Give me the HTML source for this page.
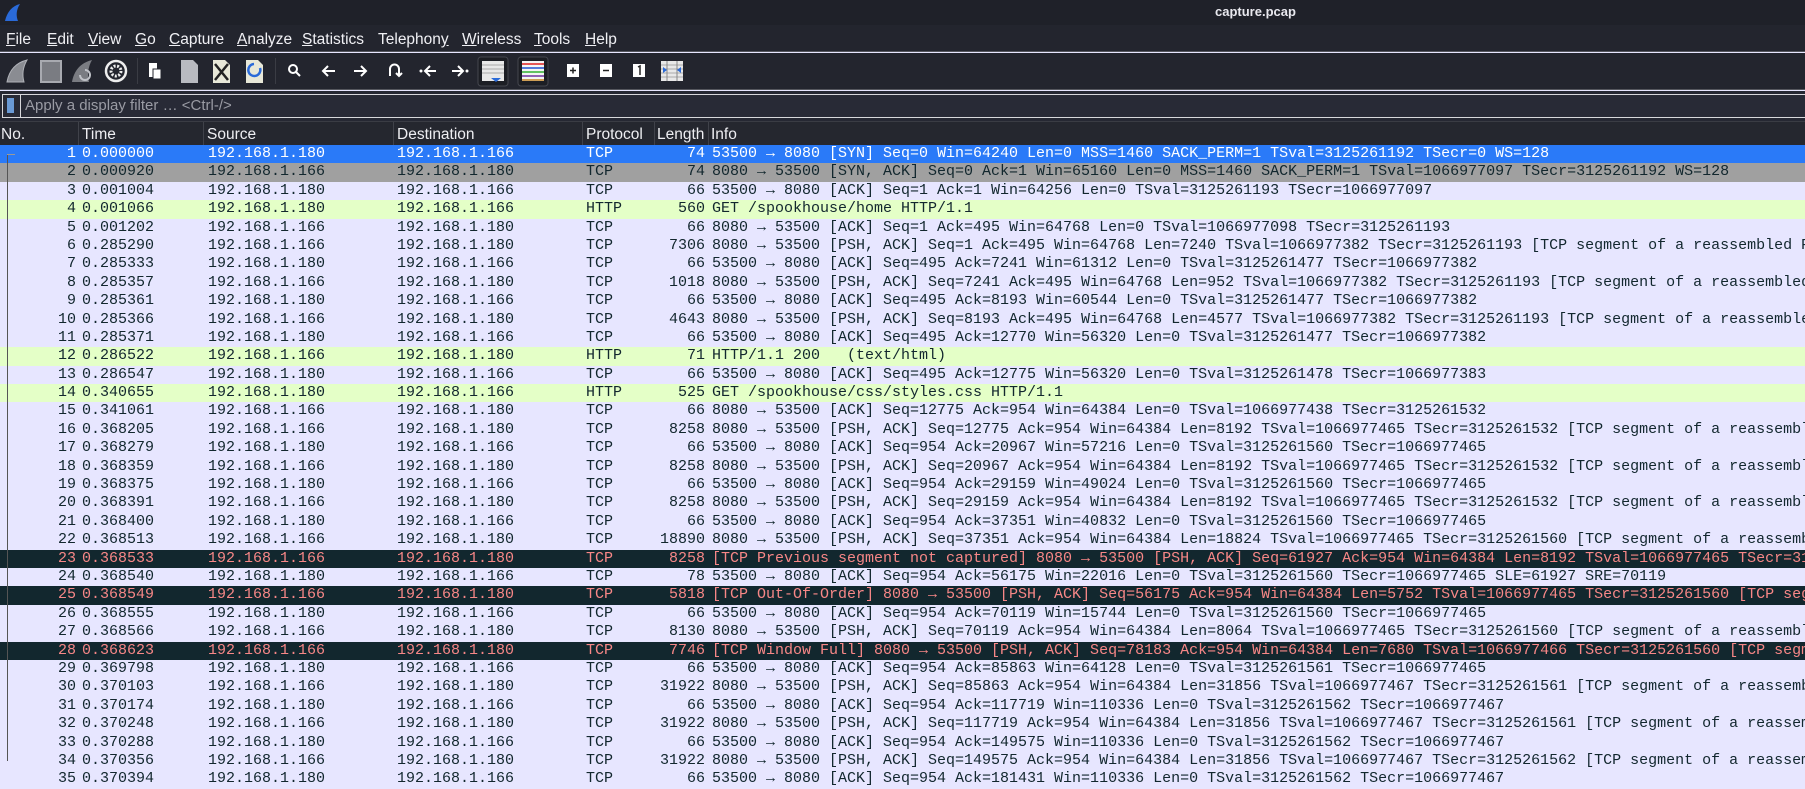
<!DOCTYPE html>
<html><head><meta charset="utf-8"><style>
*{margin:0;padding:0;box-sizing:border-box}
body{width:1805px;height:761px;overflow:hidden;background:#e7e6ff;font-family:"Liberation Sans",sans-serif;position:relative}
#title{position:absolute;left:0;top:0;width:1805px;height:25px;background:#1f2129}
#title .t{position:absolute;left:1215px;top:4px;color:#e8e8ee;font-weight:bold;font-size:13px}
#menu{position:absolute;left:0;top:25px;width:1805px;height:27px;background:#23252e;border-bottom:1px solid #55575e}
#menu span{position:absolute;top:6px;color:#f0f0f4;font-size:15.5px}
#menu u{text-decoration:underline}
#tb{position:absolute;left:0;top:53px;width:1805px;height:37px;background:#23252e;border-bottom:1px solid #55575e}
#tb svg{position:absolute;left:0;top:0}
#fb{position:absolute;left:0;top:91px;width:1805px;height:30px;background:#262833}
#fb .box{position:absolute;left:2px;top:3px;width:1803px;height:24px;border:1px solid #d8d8dc;border-right:none;background:#282a36}
#fb .bm{position:absolute;left:4px;top:3px;width:7px;height:15px;background:#6a9ad6}
#fb .dv{position:absolute;left:17px;top:0;width:1px;height:22px;background:#d8d8dc}
#fb .tx{position:absolute;left:22px;top:2px;color:#9a9ba4;font-size:15px}
#hd{position:absolute;left:0;top:121px;width:1805px;height:24px;background:#25272f;border-top:1px solid #3a3c44}
#hd span{position:absolute;top:4px;color:#eeeef2;font-size:15.5px;height:20px}
#hd i{position:absolute;top:0;width:1px;height:23px;background:#40424a}
#rows{position:absolute;left:0;top:145px;width:1805px}
.r{position:relative;height:18.4px;width:1805px;background:#e7e6ff;color:#12272e;font-family:"Liberation Mono",monospace;font-size:15px;line-height:18.4px;white-space:pre;overflow:hidden}
.r span{position:absolute;top:0}
.n{right:1729px;text-align:right}
.tm{left:82px}.s{left:208px}.d{left:397px}.p{left:586px}
.l{right:1100px;text-align:right}
.i{left:712px}
.sel{background:#2a7af8;color:#fff}
.g{background:#a0a0a0;color:#12272e}
.h{background:#e4ffc7}
.b{background:#12272e;color:#f78787}
#tree{position:absolute;left:7px;top:154px;width:1px;height:607px;background:#555}
#tree2{position:absolute;left:7px;top:154px;width:8px;height:1px;background:#999}
</style></head><body>
<div id="title"><svg width="22" height="22" style="position:absolute;left:3px;top:2px"><path d="M2 19 C4 10 9 4 17 2 C13 8 13 14 15 19 Z" fill="#2a6ad8"/></svg><span class="t">capture.pcap</span></div>
<div id="menu">
<span style="left:6px"><u>F</u>ile</span>
<span style="left:47px"><u>E</u>dit</span>
<span style="left:88px"><u>V</u>iew</span>
<span style="left:135px"><u>G</u>o</span>
<span style="left:169px"><u>C</u>apture</span>
<span style="left:237px"><u>A</u>nalyze</span>
<span style="left:302px"><u>S</u>tatistics</span>
<span style="left:378px">Telephon<u>y</u></span>
<span style="left:462px"><u>W</u>ireless</span>
<span style="left:534px"><u>T</u>ools</span>
<span style="left:585px"><u>H</u>elp</span>
</div>
<div id="tb"><svg width="720" height="37">
<path d="M7 29 C9 18 15 10 27 7 C23 14 22 22 24 29 Z" fill="#8a8c92" stroke="#b0b2b8"/>
<rect x="41" y="8" width="20" height="21" fill="#7a7c82" stroke="#a8aab0" stroke-width="2"/>
<path d="M72 29 C74 18 80 10 92 7 C88 14 87 22 89 29 Z" fill="#7a7c82"/><path d="M80 22 a5 5 0 1 0 5 -5" stroke="#c0c2c8" stroke-width="2" fill="none"/>
<circle cx="116" cy="18" r="10" fill="none" stroke="#eee" stroke-width="2.5"/><circle cx="116" cy="18" r="5" fill="none" stroke="#eee" stroke-width="3" stroke-dasharray="2 1.5"/>
<rect x="137" y="5" width="1" height="26" fill="#3a3c44"/>
<rect x="149" y="10" width="8" height="14" fill="#fff"/><rect x="153" y="16" width="8" height="10" fill="#fff" stroke="#23252e"/>
<path d="M181 7 h12 l5 5 v18 h-17 Z" fill="#b8bac0"/>
<path d="M213 7 h12 l5 5 v18 h-17 Z" fill="#e8e8d8"/><path d="M215 11 l13 16 M228 11 l-13 16" stroke="#222" stroke-width="2.5"/>
<path d="M246 7 h12 l5 5 v18 h-17 Z" fill="#e8e8d8"/><path d="M260 15 a6 6 0 1 1 -6 -4" stroke="#2a6ad8" stroke-width="2.5" fill="none"/>
<rect x="275" y="5" width="1" height="26" fill="#3a3c44"/>
<circle cx="293" cy="16" r="4" fill="none" stroke="#fff" stroke-width="2"/><path d="M296 19 l4 4" stroke="#fff" stroke-width="2"/>
<path d="M335 18 h-12 m5 -5 l-5 5 l5 5" stroke="#fff" stroke-width="2" fill="none"/>
<path d="M354 18 h12 m-5 -5 l5 5 l-5 5" stroke="#fff" stroke-width="2" fill="none"/>
<path d="M390 23 v-7 a4.5 4.5 0 0 1 9 0 v7 m-3 -3 l3 3 l3 -3" stroke="#fff" stroke-width="2" fill="none"/>
<circle cx="421" cy="18" r="1.5" fill="#fff"/><path d="M436 18 h-10 m4 -5 l-5 5 l5 5" stroke="#fff" stroke-width="2" fill="none"/>
<circle cx="467" cy="18" r="1.5" fill="#fff"/><path d="M452 18 h10 m-4 -5 l5 5 l-5 5" stroke="#fff" stroke-width="2" fill="none"/>
<rect x="478" y="4" width="30" height="29" rx="3" fill="#1c1e24" stroke="#44464e"/><rect x="482" y="8" width="22" height="20" fill="#e8e8e8"/><path d="M482 12h22M482 16h22M482 20h22" stroke="#aaa"/><path d="M491 25 h10 l-5 4 Z" fill="#2a6ad8"/>
<rect x="518" y="4" width="30" height="29" rx="3" fill="#1c1e24" stroke="#44464e"/><rect x="522" y="8" width="22" height="20" fill="#f4f4f4"/>
<path d="M522 11h22" stroke="#e02020" stroke-width="1.5"/><path d="M522 15h22" stroke="#2050d0" stroke-width="1.5"/><path d="M522 19h22" stroke="#30b030" stroke-width="1.5"/><path d="M522 23h22" stroke="#7030a0" stroke-width="1.5"/><path d="M522 27h22" stroke="#c08020" stroke-width="1.5"/>
<rect x="567" y="11" width="12" height="13" fill="#fff"/><path d="M570 17.5h6M573 14.5v6" stroke="#222" stroke-width="1.5"/>
<rect x="600" y="11" width="12" height="13" fill="#fff"/><path d="M603 17.5h6" stroke="#222" stroke-width="1.5"/>
<rect x="633" y="11" width="12" height="13" fill="#fff"/><path d="M638 14 l2 -1 v9" stroke="#222" stroke-width="1.5" fill="none"/>
<rect x="661" y="8" width="22" height="20" fill="#e8e8e8"/><path d="M661 12h22M661 16h22M661 20h22M661 24h22" stroke="#aaa"/><path d="M667 8v20M677 8v20" stroke="#888"/><path d="M663 14 l4 3 l-4 3Z M681 14 l-4 3 l4 3Z" fill="#2a6ad8"/>
</svg></div>
<div id="fb"><div class="box"><div class="bm"></div><div class="dv"></div><div class="tx">Apply a display filter … &lt;Ctrl-/&gt;</div></div></div>
<div id="hd">
<span style="left:1px">No.</span><i style="left:78px"></i>
<span style="left:82px">Time</span><i style="left:203px"></i>
<span style="left:207px">Source</span><i style="left:393px"></i>
<span style="left:397px">Destination</span><i style="left:582px"></i>
<span style="left:586px">Protocol</span><i style="left:654px"></i>
<span style="left:657px">Length</span><i style="left:708px"></i>
<span style="left:711px">Info</span>
</div>
<div id="rows">
<div class="r sel"><span class="n">1</span><span class="tm">0.000000</span><span class="s">192.168.1.180</span><span class="d">192.168.1.166</span><span class="p">TCP</span><span class="l">74</span><span class="i">53500 → 8080 [SYN] Seq=0 Win=64240 Len=0 MSS=1460 SACK_PERM=1 TSval=3125261192 TSecr=0 WS=128</span></div>
<div class="r g"><span class="n">2</span><span class="tm">0.000920</span><span class="s">192.168.1.166</span><span class="d">192.168.1.180</span><span class="p">TCP</span><span class="l">74</span><span class="i">8080 → 53500 [SYN, ACK] Seq=0 Ack=1 Win=65160 Len=0 MSS=1460 SACK_PERM=1 TSval=1066977097 TSecr=3125261192 WS=128</span></div>
<div class="r"><span class="n">3</span><span class="tm">0.001004</span><span class="s">192.168.1.180</span><span class="d">192.168.1.166</span><span class="p">TCP</span><span class="l">66</span><span class="i">53500 → 8080 [ACK] Seq=1 Ack=1 Win=64256 Len=0 TSval=3125261193 TSecr=1066977097</span></div>
<div class="r h"><span class="n">4</span><span class="tm">0.001066</span><span class="s">192.168.1.180</span><span class="d">192.168.1.166</span><span class="p">HTTP</span><span class="l">560</span><span class="i">GET /spookhouse/home HTTP/1.1</span></div>
<div class="r"><span class="n">5</span><span class="tm">0.001202</span><span class="s">192.168.1.166</span><span class="d">192.168.1.180</span><span class="p">TCP</span><span class="l">66</span><span class="i">8080 → 53500 [ACK] Seq=1 Ack=495 Win=64768 Len=0 TSval=1066977098 TSecr=3125261193</span></div>
<div class="r"><span class="n">6</span><span class="tm">0.285290</span><span class="s">192.168.1.166</span><span class="d">192.168.1.180</span><span class="p">TCP</span><span class="l">7306</span><span class="i">8080 → 53500 [PSH, ACK] Seq=1 Ack=495 Win=64768 Len=7240 TSval=1066977382 TSecr=3125261193 [TCP segment of a reassembled PDU]</span></div>
<div class="r"><span class="n">7</span><span class="tm">0.285333</span><span class="s">192.168.1.180</span><span class="d">192.168.1.166</span><span class="p">TCP</span><span class="l">66</span><span class="i">53500 → 8080 [ACK] Seq=495 Ack=7241 Win=61312 Len=0 TSval=3125261477 TSecr=1066977382</span></div>
<div class="r"><span class="n">8</span><span class="tm">0.285357</span><span class="s">192.168.1.166</span><span class="d">192.168.1.180</span><span class="p">TCP</span><span class="l">1018</span><span class="i">8080 → 53500 [PSH, ACK] Seq=7241 Ack=495 Win=64768 Len=952 TSval=1066977382 TSecr=3125261193 [TCP segment of a reassembled PDU]</span></div>
<div class="r"><span class="n">9</span><span class="tm">0.285361</span><span class="s">192.168.1.180</span><span class="d">192.168.1.166</span><span class="p">TCP</span><span class="l">66</span><span class="i">53500 → 8080 [ACK] Seq=495 Ack=8193 Win=60544 Len=0 TSval=3125261477 TSecr=1066977382</span></div>
<div class="r"><span class="n">10</span><span class="tm">0.285366</span><span class="s">192.168.1.166</span><span class="d">192.168.1.180</span><span class="p">TCP</span><span class="l">4643</span><span class="i">8080 → 53500 [PSH, ACK] Seq=8193 Ack=495 Win=64768 Len=4577 TSval=1066977382 TSecr=3125261193 [TCP segment of a reassembled PDU]</span></div>
<div class="r"><span class="n">11</span><span class="tm">0.285371</span><span class="s">192.168.1.180</span><span class="d">192.168.1.166</span><span class="p">TCP</span><span class="l">66</span><span class="i">53500 → 8080 [ACK] Seq=495 Ack=12770 Win=56320 Len=0 TSval=3125261477 TSecr=1066977382</span></div>
<div class="r h"><span class="n">12</span><span class="tm">0.286522</span><span class="s">192.168.1.166</span><span class="d">192.168.1.180</span><span class="p">HTTP</span><span class="l">71</span><span class="i">HTTP/1.1 200   (text/html)</span></div>
<div class="r"><span class="n">13</span><span class="tm">0.286547</span><span class="s">192.168.1.180</span><span class="d">192.168.1.166</span><span class="p">TCP</span><span class="l">66</span><span class="i">53500 → 8080 [ACK] Seq=495 Ack=12775 Win=56320 Len=0 TSval=3125261478 TSecr=1066977383</span></div>
<div class="r h"><span class="n">14</span><span class="tm">0.340655</span><span class="s">192.168.1.180</span><span class="d">192.168.1.166</span><span class="p">HTTP</span><span class="l">525</span><span class="i">GET /spookhouse/css/styles.css HTTP/1.1</span></div>
<div class="r"><span class="n">15</span><span class="tm">0.341061</span><span class="s">192.168.1.166</span><span class="d">192.168.1.180</span><span class="p">TCP</span><span class="l">66</span><span class="i">8080 → 53500 [ACK] Seq=12775 Ack=954 Win=64384 Len=0 TSval=1066977438 TSecr=3125261532</span></div>
<div class="r"><span class="n">16</span><span class="tm">0.368205</span><span class="s">192.168.1.166</span><span class="d">192.168.1.180</span><span class="p">TCP</span><span class="l">8258</span><span class="i">8080 → 53500 [PSH, ACK] Seq=12775 Ack=954 Win=64384 Len=8192 TSval=1066977465 TSecr=3125261532 [TCP segment of a reassembled PDU]</span></div>
<div class="r"><span class="n">17</span><span class="tm">0.368279</span><span class="s">192.168.1.180</span><span class="d">192.168.1.166</span><span class="p">TCP</span><span class="l">66</span><span class="i">53500 → 8080 [ACK] Seq=954 Ack=20967 Win=57216 Len=0 TSval=3125261560 TSecr=1066977465</span></div>
<div class="r"><span class="n">18</span><span class="tm">0.368359</span><span class="s">192.168.1.166</span><span class="d">192.168.1.180</span><span class="p">TCP</span><span class="l">8258</span><span class="i">8080 → 53500 [PSH, ACK] Seq=20967 Ack=954 Win=64384 Len=8192 TSval=1066977465 TSecr=3125261532 [TCP segment of a reassembled PDU]</span></div>
<div class="r"><span class="n">19</span><span class="tm">0.368375</span><span class="s">192.168.1.180</span><span class="d">192.168.1.166</span><span class="p">TCP</span><span class="l">66</span><span class="i">53500 → 8080 [ACK] Seq=954 Ack=29159 Win=49024 Len=0 TSval=3125261560 TSecr=1066977465</span></div>
<div class="r"><span class="n">20</span><span class="tm">0.368391</span><span class="s">192.168.1.166</span><span class="d">192.168.1.180</span><span class="p">TCP</span><span class="l">8258</span><span class="i">8080 → 53500 [PSH, ACK] Seq=29159 Ack=954 Win=64384 Len=8192 TSval=1066977465 TSecr=3125261532 [TCP segment of a reassembled PDU]</span></div>
<div class="r"><span class="n">21</span><span class="tm">0.368400</span><span class="s">192.168.1.180</span><span class="d">192.168.1.166</span><span class="p">TCP</span><span class="l">66</span><span class="i">53500 → 8080 [ACK] Seq=954 Ack=37351 Win=40832 Len=0 TSval=3125261560 TSecr=1066977465</span></div>
<div class="r"><span class="n">22</span><span class="tm">0.368513</span><span class="s">192.168.1.166</span><span class="d">192.168.1.180</span><span class="p">TCP</span><span class="l">18890</span><span class="i">8080 → 53500 [PSH, ACK] Seq=37351 Ack=954 Win=64384 Len=18824 TSval=1066977465 TSecr=3125261560 [TCP segment of a reassembled PDU]</span></div>
<div class="r b"><span class="n">23</span><span class="tm">0.368533</span><span class="s">192.168.1.166</span><span class="d">192.168.1.180</span><span class="p">TCP</span><span class="l">8258</span><span class="i">[TCP Previous segment not captured] 8080 → 53500 [PSH, ACK] Seq=61927 Ack=954 Win=64384 Len=8192 TSval=1066977465 TSecr=3125261560</span></div>
<div class="r"><span class="n">24</span><span class="tm">0.368540</span><span class="s">192.168.1.180</span><span class="d">192.168.1.166</span><span class="p">TCP</span><span class="l">78</span><span class="i">53500 → 8080 [ACK] Seq=954 Ack=56175 Win=22016 Len=0 TSval=3125261560 TSecr=1066977465 SLE=61927 SRE=70119</span></div>
<div class="r b"><span class="n">25</span><span class="tm">0.368549</span><span class="s">192.168.1.166</span><span class="d">192.168.1.180</span><span class="p">TCP</span><span class="l">5818</span><span class="i">[TCP Out-Of-Order] 8080 → 53500 [PSH, ACK] Seq=56175 Ack=954 Win=64384 Len=5752 TSval=1066977465 TSecr=3125261560 [TCP segment</span></div>
<div class="r"><span class="n">26</span><span class="tm">0.368555</span><span class="s">192.168.1.180</span><span class="d">192.168.1.166</span><span class="p">TCP</span><span class="l">66</span><span class="i">53500 → 8080 [ACK] Seq=954 Ack=70119 Win=15744 Len=0 TSval=3125261560 TSecr=1066977465</span></div>
<div class="r"><span class="n">27</span><span class="tm">0.368566</span><span class="s">192.168.1.166</span><span class="d">192.168.1.180</span><span class="p">TCP</span><span class="l">8130</span><span class="i">8080 → 53500 [PSH, ACK] Seq=70119 Ack=954 Win=64384 Len=8064 TSval=1066977465 TSecr=3125261560 [TCP segment of a reassembled PDU]</span></div>
<div class="r b"><span class="n">28</span><span class="tm">0.368623</span><span class="s">192.168.1.166</span><span class="d">192.168.1.180</span><span class="p">TCP</span><span class="l">7746</span><span class="i">[TCP Window Full] 8080 → 53500 [PSH, ACK] Seq=78183 Ack=954 Win=64384 Len=7680 TSval=1066977466 TSecr=3125261560 [TCP segment</span></div>
<div class="r"><span class="n">29</span><span class="tm">0.369798</span><span class="s">192.168.1.180</span><span class="d">192.168.1.166</span><span class="p">TCP</span><span class="l">66</span><span class="i">53500 → 8080 [ACK] Seq=954 Ack=85863 Win=64128 Len=0 TSval=3125261561 TSecr=1066977465</span></div>
<div class="r"><span class="n">30</span><span class="tm">0.370103</span><span class="s">192.168.1.166</span><span class="d">192.168.1.180</span><span class="p">TCP</span><span class="l">31922</span><span class="i">8080 → 53500 [PSH, ACK] Seq=85863 Ack=954 Win=64384 Len=31856 TSval=1066977467 TSecr=3125261561 [TCP segment of a reassembled PDU]</span></div>
<div class="r"><span class="n">31</span><span class="tm">0.370174</span><span class="s">192.168.1.180</span><span class="d">192.168.1.166</span><span class="p">TCP</span><span class="l">66</span><span class="i">53500 → 8080 [ACK] Seq=954 Ack=117719 Win=110336 Len=0 TSval=3125261562 TSecr=1066977467</span></div>
<div class="r"><span class="n">32</span><span class="tm">0.370248</span><span class="s">192.168.1.166</span><span class="d">192.168.1.180</span><span class="p">TCP</span><span class="l">31922</span><span class="i">8080 → 53500 [PSH, ACK] Seq=117719 Ack=954 Win=64384 Len=31856 TSval=1066977467 TSecr=3125261561 [TCP segment of a reassembled PDU]</span></div>
<div class="r"><span class="n">33</span><span class="tm">0.370288</span><span class="s">192.168.1.180</span><span class="d">192.168.1.166</span><span class="p">TCP</span><span class="l">66</span><span class="i">53500 → 8080 [ACK] Seq=954 Ack=149575 Win=110336 Len=0 TSval=3125261562 TSecr=1066977467</span></div>
<div class="r"><span class="n">34</span><span class="tm">0.370356</span><span class="s">192.168.1.166</span><span class="d">192.168.1.180</span><span class="p">TCP</span><span class="l">31922</span><span class="i">8080 → 53500 [PSH, ACK] Seq=149575 Ack=954 Win=64384 Len=31856 TSval=1066977467 TSecr=3125261562 [TCP segment of a reassembled PDU]</span></div>
<div class="r"><span class="n">35</span><span class="tm">0.370394</span><span class="s">192.168.1.180</span><span class="d">192.168.1.166</span><span class="p">TCP</span><span class="l">66</span><span class="i">53500 → 8080 [ACK] Seq=954 Ack=181431 Win=110336 Len=0 TSval=3125261562 TSecr=1066977467</span></div>
</div>
<div id="tree"></div><div id="tree2"></div>
</body></html>
